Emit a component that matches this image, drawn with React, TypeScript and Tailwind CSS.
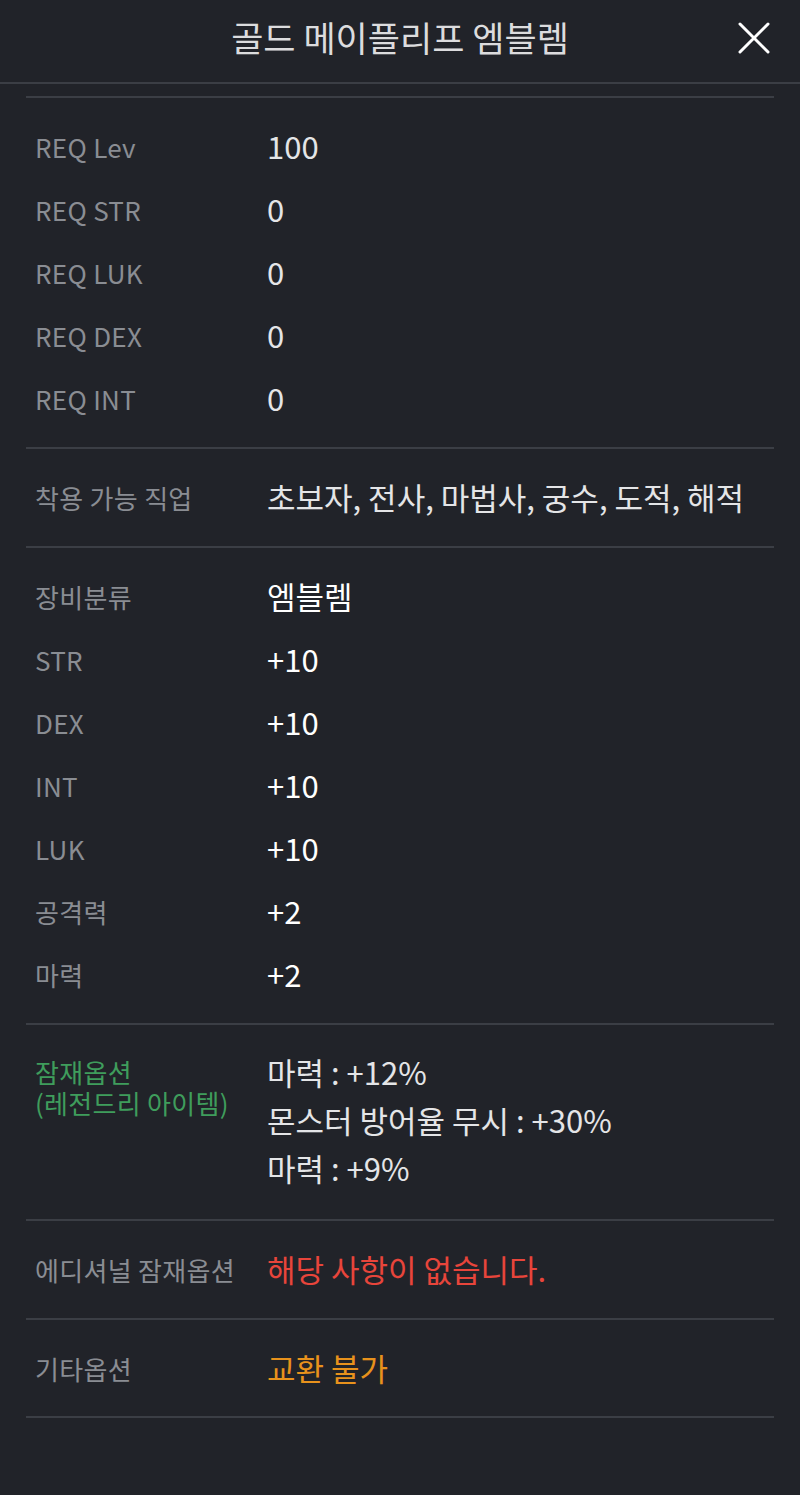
import React from "react";

type Row = { label: string; value: string };

const reqRows: Row[] = [
  { label: "REQ Lev", value: "100" },
  { label: "REQ STR", value: "0" },
  { label: "REQ LUK", value: "0" },
  { label: "REQ DEX", value: "0" },
  { label: "REQ INT", value: "0" },
];

const statRows: Row[] = [
  { label: "장비분류", value: "엠블렘" },
  { label: "STR", value: "+10" },
  { label: "DEX", value: "+10" },
  { label: "INT", value: "+10" },
  { label: "LUK", value: "+10" },
  { label: "공격력", value: "+2" },
  { label: "마력", value: "+2" },
];

const potentials = ["마력 : +12%", "몬스터 방어율 무시 : +30%", "마력 : +9%"];

const InfoRow = ({
  label,
  value,
  valueClass = "text-[#e4e5e7]",
}: {
  label: string;
  value: string;
  valueClass?: string;
}) => (
  <div className="flex h-[63px] items-center">
    <div className="w-[241px] pl-[9px] text-[26px] tracking-[0.3px] text-[#8a8d93]">{label}</div>
    <div className={`text-[31px] ${valueClass}`}>{value}</div>
  </div>
);

const Section = ({
  children,
  className = "py-[17px]",
}: {
  children: React.ReactNode;
  className?: string;
}) => <div className={`border-t-2 border-[#3b3e45] ${className}`}>{children}</div>;

export default function App() {
  return (
    <div
      className="min-h-[1495px] bg-[#212329]"
      style={{ fontFamily: '"Noto Sans CJK KR", "Noto Sans", sans-serif' }}
    >
      <header className="relative flex h-[84px] items-center justify-center border-b-2 border-[#3b3e45]">
        <h1 className="-mt-[8px] text-[35px] text-[#dcdcde]">골드 메이플리프 엠블렘</h1>
        <button className="absolute right-[30px] top-[22px] text-white" aria-label="닫기">
          <svg width="32" height="32" viewBox="0 0 32 32" fill="none">
            <path d="M2 2 L30 30 M30 2 L2 30" stroke="currentColor" strokeWidth="3" strokeLinecap="round" />
          </svg>
        </button>
      </header>

      <div className="px-[26px] pt-[12px]">
        <Section>
          {reqRows.map((r) => (
            <InfoRow key={r.label} label={r.label} value={r.value} />
          ))}
        </Section>

        <Section>
          <InfoRow label="착용 가능 직업" value="초보자, 전사, 마법사, 궁수, 도적, 해적" />
        </Section>

        <Section>
          {statRows.map((r) => (
            <InfoRow key={r.label} label={r.label} value={r.value} valueClass="text-white" />
          ))}
        </Section>

        <Section className="pt-[23px] pb-[27px]">
          <div className="flex">
            <div className="w-[241px] pt-[8px] pl-[9px] text-[26px] leading-[31px] tracking-[0.3px] text-[#3f9d5c]">
              <div>잠재옵션</div>
              <div>(레전드리 아이템)</div>
            </div>
            <div className="flex flex-col text-[31px] leading-[48px] text-[#e4e5e7]">
              {potentials.map((p) => (
                <div key={p}>{p}</div>
              ))}
            </div>
          </div>
        </Section>

        <Section>
          <InfoRow label="에디셔널 잠재옵션" value="해당 사항이 없습니다." valueClass="text-[#e8453b]" />
        </Section>

        <Section className="pt-[17px] pb-[16px] border-b-2">
          <InfoRow label="기타옵션" value="교환 불가" valueClass="text-[#e8921c]" />
        </Section>
      </div>
    </div>
  );
}
